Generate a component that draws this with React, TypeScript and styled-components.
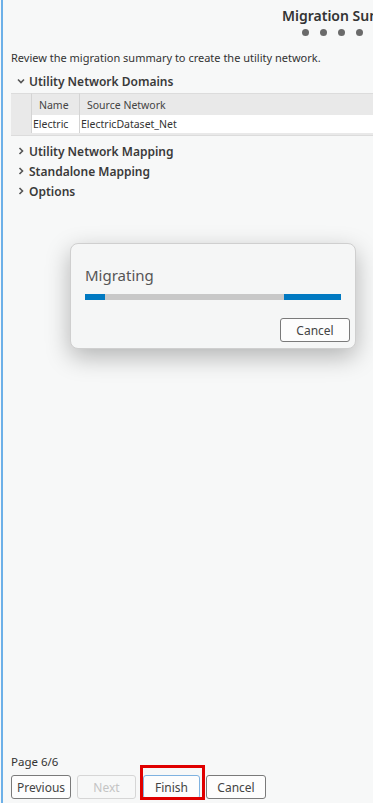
import React from "react";
import styled, { createGlobalStyle } from "styled-components";

const Global = createGlobalStyle`
  html, body { margin: 0; padding: 0; background: #f7f8f8; }
  body { font-family: "Noto Sans", "Open Sans", sans-serif; color: #333; }
  * { box-sizing: border-box; }
`;

const Page = styled.div`
  position: relative;
  height: 803px;
  width: 373px;
  overflow: hidden;
  margin-left: 1px;
  border-left: 2px solid #6cb0e8;
  background: #f7f8f8;
  display: flex;
  flex-direction: column;
`;

const Header = styled.div`
  padding: 6px 0 0 279px;
  white-space: nowrap;
  height: 49px;
`;

const Title = styled.div`
  font-size: 14px;
  font-weight: 600;
  color: #333;
  line-height: 20px;
`;

const Dots = styled.div`
  display: flex;
  gap: 11px;
  margin-top: 3px;
  padding-left: 20px;
`;

const Dot = styled.span`
  flex: none;
  width: 7px;
  height: 7px;
  border-radius: 50%;
  background: #6a6a6a;
`;

const Content = styled.div`
  flex: 1;
  padding: 0 0 0 8px;
`;

const Intro = styled.div`
  font-size: 11px;
  line-height: 18px;
  margin-bottom: 4px;
  white-space: nowrap;
`;

const Section = styled.div`
  display: flex;
  align-items: center;
  gap: 4px;
  padding-left: 6px;
  height: 20px;
  font-size: 12px;
  font-weight: 600;
  color: #3a3a3a;
  white-space: nowrap;
`;

const Chevron = styled.svg`
  width: 8px;
  height: 8px;
  flex: none;
`;

const Table = styled.div`
  margin: 2px 0 5px 0;
  display: grid;
  grid-template-columns: 20px 48px 1fr;
  border-bottom: 1px solid #dcdcdc;
  background: #e9e9e9;
  font-size: 10.5px;
  color: #333;
`;

const HeadCell = styled.div<{ $first?: boolean }>`
  height: 22px;
  display: flex;
  align-items: center;
  padding-left: ${(p) => (p.$first ? 0 : 7)}px;
  border-left: ${(p) => (p.$first ? "none" : "1px solid #d4d4d4")};
  border-top: 1px solid #dcdcdc;
  color: #444;
`;

const Cell = styled.div<{ $stub?: boolean }>`
  height: 18px;
  display: flex;
  align-items: center;
  padding-left: 1px;
  background: ${(p) => (p.$stub ? "#e9e9e9" : "#fff")};
  border-left: ${(p) => (p.$stub ? "none" : "1px solid #d4d4d4")};
  white-space: nowrap;
  margin-bottom: 2px;
`;

const Footer = styled.div`
  padding: 0 0 4px 8px;
`;

const PageLabel = styled.div`
  font-size: 11.5px;
  line-height: 16px;
  margin-bottom: 5px;
`;

const ButtonRow = styled.div`
  display: flex;
  align-items: flex-start;
  height: 24px;
  gap: 6px;
`;

const Button = styled.button<{ $disabled?: boolean; $focus?: boolean; $w: number }>`
  flex: none;
  width: ${(p) => p.$w}px;
  height: 24px;
  font-family: inherit;
  font-size: 12px;
  border-radius: 3px;
  background: ${(p) => (p.$disabled ? "#f7f8f8" : "#fdfdfd")};
  color: ${(p) => (p.$disabled ? "#c4c4c4" : "#444")};
  border: 1px solid ${(p) => (p.$disabled ? "#d6d6d6" : p.$focus ? "#7fb2e0" : "#7a7a7a")};
  padding: 0;
`;

const Highlight = styled.div`
  flex: none;
  height: 35px;
  overflow: hidden;
  border: 3px solid #e00000;
  padding: 7px 2px 0 0;
  margin: -10px -5px 0 -2px;
  display: flex;
  align-items: flex-start;
`;

const Overlay = styled.div`
  position: absolute;
  left: 67px;
  top: 243px;
  width: 286px;
  height: 106px;
  background: #f5f6f6;
  border: 1px solid #cfcfcf;
  border-radius: 8px;
  box-shadow: 0 8px 24px rgba(0, 0, 0, 0.28);
  padding: 20px 5px 0 14px;
  display: flex;
  flex-direction: column;
`;

const DialogTitle = styled.div`
  font-size: 15px;
  color: #555;
  line-height: 22px;
  font-weight: 400;
`;

const Progress = styled.div`
  margin-top: 8px;
  height: 6px;
  width: 256px;
  background: #c8c8c8;
  display: flex;
  justify-content: space-between;
`;

const Segment = styled.div<{ $w: number }>`
  width: ${(p) => p.$w}px;
  background: #0079c1;
`;

const DialogActions = styled.div`
  display: flex;
  justify-content: flex-end;
  margin-top: 18px;
`;

const DialogButton = styled.button`
  width: 70px;
  height: 24px;
  font-family: inherit;
  font-size: 12px;
  color: #444;
  background: #fdfdfd;
  border: 1px solid #7a7a7a;
  border-radius: 3px;
`;

const Down = () => (
  <Chevron viewBox="0 0 8 8">
    <path d="M1 2.5 L4 5.5 L7 2.5" stroke="#555" strokeWidth="1.6" fill="none" />
  </Chevron>
);
const Right = () => (
  <Chevron viewBox="0 0 8 8">
    <path d="M2.5 1 L5.5 4 L2.5 7" stroke="#555" strokeWidth="1.6" fill="none" />
  </Chevron>
);

export default function App() {
  return (
    <>
      <Global />
      <Page>
        <Header>
          <Title>Migration Summary</Title>
          <Dots>
            <Dot />
            <Dot />
            <Dot />
            <Dot />
            <Dot />
            <Dot />
          </Dots>
        </Header>
        <Content>
          <Intro>Review the migration summary to create the utility network.</Intro>
          <Section>
            <Down />
            Utility Network Domains
          </Section>
          <Table>
            <HeadCell $first />
            <HeadCell>Name</HeadCell>
            <HeadCell>Source Network</HeadCell>
            <Cell $stub />
            <Cell>Electric</Cell>
            <Cell>ElectricDataset_Net</Cell>
          </Table>
          <Section>
            <Right />
            Utility Network Mapping
          </Section>
          <Section>
            <Right />
            Standalone Mapping
          </Section>
          <Section>
            <Right />
            Options
          </Section>
        </Content>
        <Footer>
          <PageLabel>Page 6/6</PageLabel>
          <ButtonRow>
            <Button $w={60}>Previous</Button>
            <Button $w={59} $disabled>Next</Button>
            <Highlight>
              <Button $w={57} $focus>Finish</Button>
            </Highlight>
            <Button $w={60}>Cancel</Button>
          </ButtonRow>
        </Footer>
        <Overlay>
          <DialogTitle>Migrating</DialogTitle>
          <Progress>
            <Segment $w={20} />
            <Segment $w={57} />
          </Progress>
          <DialogActions>
            <DialogButton>Cancel</DialogButton>
          </DialogActions>
        </Overlay>
      </Page>
    </>
  );
}
